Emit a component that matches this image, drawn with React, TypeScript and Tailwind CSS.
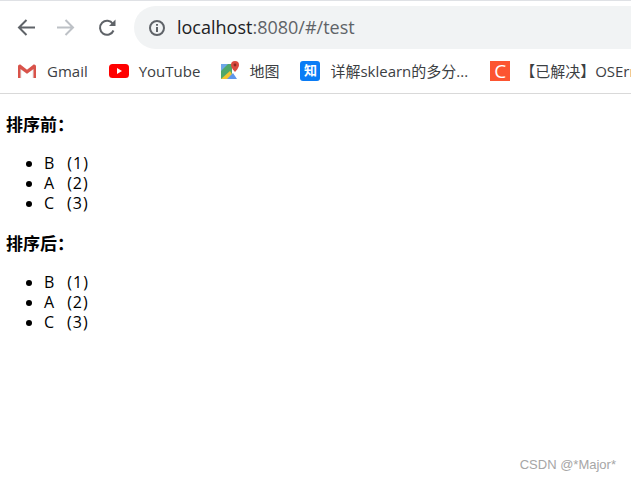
const sans = "font-['Open_Sans','Noto_Sans','Noto_Sans_CJK_SC',sans-serif]";

const GmailIcon = () => (
  <svg width="20" height="16" viewBox="0 0 20 16" className="shrink-0">
    <path d="M1 3v12h3.500V7L10 11l5.500-4v8H19V3l-1.700-1.500L10 7 2.700 1.500z" fill="#e8e8e8" />
    <path d="M1 15V3.500C1 2 2.800 1 4 2l6 4.800L16 2c1.200-1 3 0 3 1.500V15h-2.500V6L10 10.800 3.500 6v9z" fill="#d9534a" />
  </svg>
);

const YoutubeIcon = () => (
  <svg width="20" height="14" viewBox="0 0 20 14" className="shrink-0">
    <rect width="20" height="14" rx="3.500" fill="#ff0000" />
    <path d="M8 4l5 3-5 3z" fill="#fff" />
  </svg>
);

const MapsIcon = () => (
  <svg width="18" height="20" viewBox="0 0 18 20" className="shrink-0">
    <path d="M0 3h11v15H0z" fill="#4fa86b" />
    <path d="M0 18l9-8 5 8z" fill="#f4c430" />
    <path d="M0 3h7L0 10z" fill="#6ea8e8" />
    <path d="M6 18l6-6 4 6z" fill="#5f96ea" />
    <path d="M14 0a4 4 0 0 0-4 4c0 3 4 7 4 7s4-4 4-7a4 4 0 0 0-4-4z" fill="#db4b3f" />
    <circle cx="14" cy="4" r="1.400" fill="#8c2a22" />
  </svg>
);

const Bookmark = ({ icon, label, className }: { icon: React.ReactNode; label: string; className: string }) => (
  <div className={`flex items-center shrink-0 ${className}`}>
    {icon}
    <span className="whitespace-nowrap">{label}</span>
  </div>
);

const Item = ({ letter, num }: { letter: string; num: number }) => (
  <li>
    {letter}
    <span className="ml-[13px] tracking-[1px]">({num})</span>
  </li>
);

const Section = ({ title }: { title: string }) => (
  <div>
    <h3 className="text-[17px] leading-[23px] font-bold mt-[19px] mb-[17px] text-black">{title}</h3>
    <ul className="list-disc pl-[38px] text-[16px] leading-[20px] text-black">
      <Item letter="B" num={1} />
      <Item letter="A" num={2} />
      <Item letter="C" num={3} />
    </ul>
  </div>
);

export default function App() {
  return (
    <div className={`relative w-[631px] h-[480px] overflow-hidden bg-white ${sans}`}>
      <div className="h-[94px] border-t border-t-[#dfe1e5] border-b border-b-[#d9d9d9]">
        <div className="h-[48px] flex items-center pt-[5px]">
          <div className="flex items-center w-[134px] pl-[17px] gap-[20px] shrink-0">
            <svg width="19" height="19" viewBox="0 0 19 19" fill="none" stroke="#5f6368" strokeWidth="2">
              <path d="M18 9.500H2M9.500 2L2 9.500 9.500 17" />
            </svg>
            <svg width="19" height="19" viewBox="0 0 19 19" fill="none" stroke="#bdc1c6" strokeWidth="2">
              <path d="M1 9.500h16M9.500 2L17 9.500 9.500 17" />
            </svg>
            <svg width="19" height="19" viewBox="0 0 19 19" fill="none" className="ml-[3px]">
              <path d="M15.500 12.500a7 7 0 1 1-.6-6.500" stroke="#5f6368" strokeWidth="2" />
              <path d="M17.500 1.500v6.500H11z" fill="#5f6368" />
            </svg>
          </div>
          <div className="flex-1 h-[43px] bg-[#f1f3f4] rounded-l-[22px] flex items-center pl-[14px]">
            <svg width="18" height="18" viewBox="0 0 18 18" fill="none" className="shrink-0">
              <circle cx="9" cy="9" r="7" stroke="#5f6368" strokeWidth="2" />
              <path d="M9 8v5M9 5v1.800" stroke="#5f6368" strokeWidth="2" />
            </svg>
            <span className="ml-[11px] text-[18px] text-[#202124]">
              localhost<span className="text-[#5f6368]">:8080/#/test</span>
            </span>
          </div>
        </div>
        <div className="h-[44px] flex items-center text-[15px] text-[#3c4043] overflow-hidden">
          <Bookmark icon={<GmailIcon />} label="Gmail" className="ml-[17px] gap-[10px]" />
          <Bookmark icon={<YoutubeIcon />} label="YouTube" className="ml-[21px] gap-[10px]" />
          <Bookmark icon={<MapsIcon />} label="地图" className="ml-[21px] gap-[10px]" />
          <Bookmark
            icon={
              <span className="w-[20px] h-[20px] rounded-[3px] bg-[#0a7cf5] text-white text-[13px] font-bold flex items-center justify-center">
                知
              </span>
            }
            label="详解sklearn的多分..."
            className="ml-[21px] gap-[10px]"
          />
          <Bookmark
            icon={
              <span className="w-[20px] h-[20px] bg-[#fc5531] text-white text-[19px] flex items-center justify-center">
                C
              </span>
            }
            label="【已解决】OSError"
            className="ml-[22px] gap-[10px]"
          />
        </div>
      </div>
      <div className="pl-[6px]">
        <Section title="排序前：" />
        <Section title="排序后：" />
      </div>
      <div className="absolute right-[15px] top-[455px] text-[13px] text-[#a6a6a6] font-['Liberation_Sans',sans-serif]">
        CSDN @*Major*
      </div>
    </div>
  );
}
